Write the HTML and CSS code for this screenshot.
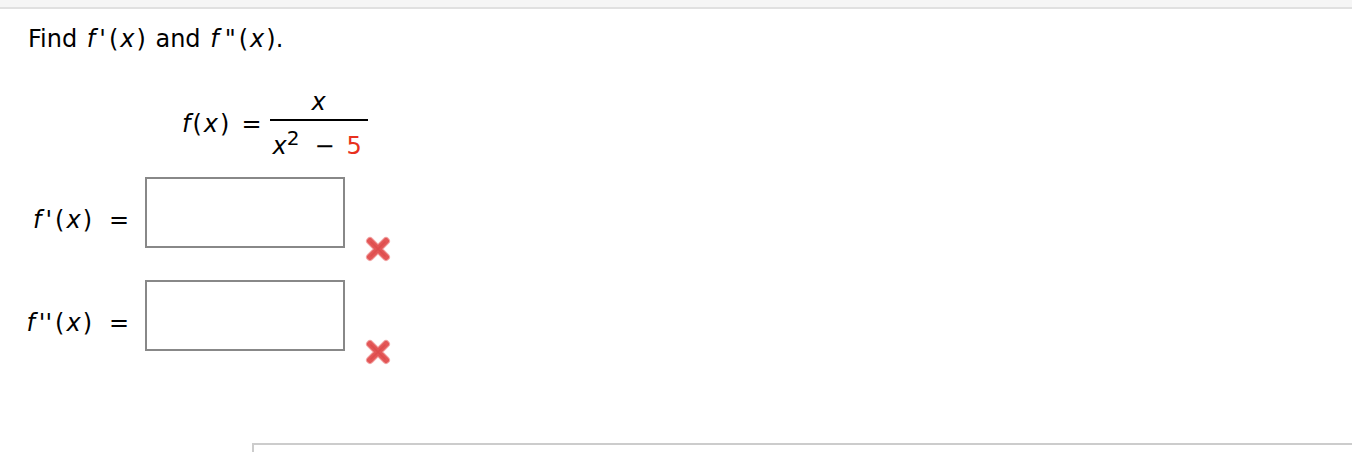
FILE: index.html
```html
<!DOCTYPE html>
<html>
<head>
<meta charset="utf-8">
<link rel="stylesheet" href="styles.css">
</head>
<body>
<div class="topbar"></div>
<main class="question">
  <p class="prompt">Find <i>f</i><span class="pr">'</span>(<i class="v">x</i>) and <i>f</i><span class="pr dbl">"</span>(<i class="v">x</i>).</p>
  <div class="given">
    <span class="lhs"><i>f</i>(<i>x</i>)</span>
    <span class="eq">=</span>
    <span class="frac">
      <span class="num"><i>x</i></span>
      <span class="den"><i>x</i><sup>2</sup><span class="minus">&minus;</span><span class="red">5</span></span>
    </span>
  </div>
  <div class="answer-row">
    <span class="label"><i>f</i><span class="pr">'</span>(<i class="v">x</i>)</span>
    <span class="eq">=</span>
    <span class="box"></span>
    <svg class="wrong" viewBox="0 0 28 26" width="28" height="26"><path d="M6 5 L22 21 M22 5 L6 21" stroke="#f2a7a7" stroke-width="8" stroke-linecap="round"/><path d="M6 5 L22 21 M22 5 L6 21" stroke="#e35656" stroke-width="6" stroke-linecap="round"/><path d="M7 6 L21 20 M21 6 L7 20" stroke="#d84545" stroke-width="1.5" stroke-linecap="round" opacity="0.5"/></svg>
  </div>
  <div class="answer-row second">
    <span class="label"><i>f</i><span class="pr">''</span>(<i class="v">x</i>)</span>
    <span class="eq">=</span>
    <span class="box"></span>
    <svg class="wrong" viewBox="0 0 28 26" width="28" height="26"><path d="M6 5 L22 21 M22 5 L6 21" stroke="#f2a7a7" stroke-width="8" stroke-linecap="round"/><path d="M6 5 L22 21 M22 5 L6 21" stroke="#e35656" stroke-width="6" stroke-linecap="round"/><path d="M7 6 L21 20 M21 6 L7 20" stroke="#d84545" stroke-width="1.5" stroke-linecap="round" opacity="0.5"/></svg>
  </div>
</main>
<div class="bottom-panel"></div>
</body>
</html>
```

FILE: styles.css
```css
html, body {
  margin: 0;
  padding: 0;
  background: #fff;
}
body {
  font-family: "DejaVu Sans", Verdana, sans-serif;
  color: #000;
  overflow: hidden;
  height: 452px;
}
.topbar {
  height: 7px;
  background: #f5f5f5;
  border-bottom: 2px solid #e0e0e0;
}
.question {
  padding-left: 28px;
}
.prompt {
  margin: 16px 0 0 0;
  font-size: 24px;
  line-height: 28px;
  word-spacing: 2px;
}
.pr {
  display: inline-block;
  margin: 0 3px 0 4px;
}
.pr.dbl {
  margin: 0 3px 0 6px;
}
.v {
  display: inline-block;
  margin: 0 2px;
}
.label .pr {
  margin: 0 3px 0 4px;
}
.given {
  display: flex;
  align-items: center;
  margin: 36px 0 0 154px;
  font-size: 24px;
}
.lhs {
  letter-spacing: 2px;
}
.given .eq {
  margin: 0 8px 0 10px;
}
.frac {
  display: inline-flex;
  flex-direction: column;
  align-items: center;
}
.num {
  line-height: 26px;
  padding-bottom: 4px;
}
.den {
  border-top: 2px solid #000;
  padding: 12px 6px 0 3px;
  line-height: 26px;
}
.den sup {
  font-size: 20px;
  vertical-align: 9px;
  line-height: 0;
}
.minus {
  margin: 0 12px 0 15px;
}
.red {
  color: #e8301e;
}
.answer-row {
  display: flex;
  align-items: center;
  height: 71px;
  margin: 18px 0 0 -28px;
  font-size: 24px;
}
.answer-row.second {
  margin-top: 32px;
}
.label {
  width: 92px;
  text-align: right;
  line-height: 28px;
  padding-top: 14px;
}
.answer-row .eq {
  margin-left: 17px;
  line-height: 28px;
  padding-top: 14px;
}
.box {
  box-sizing: border-box;
  width: 200px;
  height: 71px;
  margin-left: 16px;
  border: 2px solid #888;
  background: #fff;
}
.wrong {
  align-self: flex-end;
  margin: 0 0 -14px 19px;
}
.bottom-panel {
  margin: 92px 0 0 252px;
  height: 20px;
  border-top: 2px solid #cccccc;
  border-left: 2px solid #cccccc;
}
```
